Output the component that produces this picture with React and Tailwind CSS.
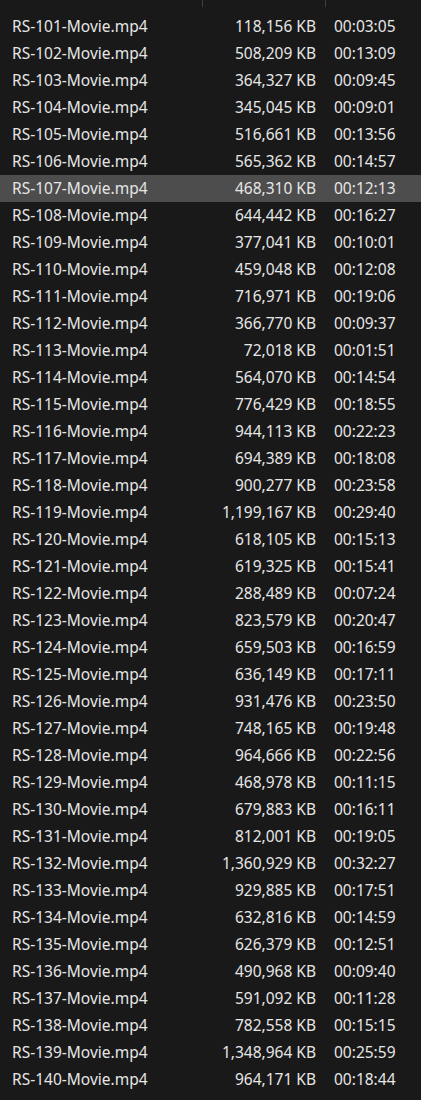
import React from "react";

const files = [
  ["101", "118,156", "00:03:05"],
  ["102", "508,209", "00:13:09"],
  ["103", "364,327", "00:09:45"],
  ["104", "345,045", "00:09:01"],
  ["105", "516,661", "00:13:56"],
  ["106", "565,362", "00:14:57"],
  ["107", "468,310", "00:12:13"],
  ["108", "644,442", "00:16:27"],
  ["109", "377,041", "00:10:01"],
  ["110", "459,048", "00:12:08"],
  ["111", "716,971", "00:19:06"],
  ["112", "366,770", "00:09:37"],
  ["113", "72,018", "00:01:51"],
  ["114", "564,070", "00:14:54"],
  ["115", "776,429", "00:18:55"],
  ["116", "944,113", "00:22:23"],
  ["117", "694,389", "00:18:08"],
  ["118", "900,277", "00:23:58"],
  ["119", "1,199,167", "00:29:40"],
  ["120", "618,105", "00:15:13"],
  ["121", "619,325", "00:15:41"],
  ["122", "288,489", "00:07:24"],
  ["123", "823,579", "00:20:47"],
  ["124", "659,503", "00:16:59"],
  ["125", "636,149", "00:17:11"],
  ["126", "931,476", "00:23:50"],
  ["127", "748,165", "00:19:48"],
  ["128", "964,666", "00:22:56"],
  ["129", "468,978", "00:11:15"],
  ["130", "679,883", "00:16:11"],
  ["131", "812,001", "00:19:05"],
  ["132", "1,360,929", "00:32:27"],
  ["133", "929,885", "00:17:51"],
  ["134", "632,816", "00:14:59"],
  ["135", "626,379", "00:12:51"],
  ["136", "490,968", "00:09:40"],
  ["137", "591,092", "00:11:28"],
  ["138", "782,558", "00:15:15"],
  ["139", "1,348,964", "00:25:59"],
  ["140", "964,171", "00:18:44"],
];

export default function App() {
  return (
    <div
      className="w-[421px] h-[1100px] bg-[#191919] text-[#e6e6e6] text-[15.5px] overflow-hidden"
      style={{ fontFamily: '"Noto Sans", "Open Sans", sans-serif' }}
    >
      {/* column header edge */}
      <div className="flex h-[13px]">
        <div className="w-[203px] border-r border-[#3f3f3f] h-[7px]" />
        <div className="w-[123px] border-r border-[#3f3f3f] h-[7px]" />
      </div>

      {files.map(([num, size, time]) => (
        <div
          key={num}
          className={`flex items-center h-[27px] ${num === "107" ? "bg-[#4d4d4d]" : ""}`}
        >
          <div className="w-[203px] pl-3 whitespace-nowrap">RS-{num}-Movie.mp4</div>
          <div className="w-[123px] pr-[10px] text-right whitespace-nowrap">{size} KB</div>
          <div className="pl-2 whitespace-nowrap">{time}</div>
        </div>
      ))}
    </div>
  );
}
